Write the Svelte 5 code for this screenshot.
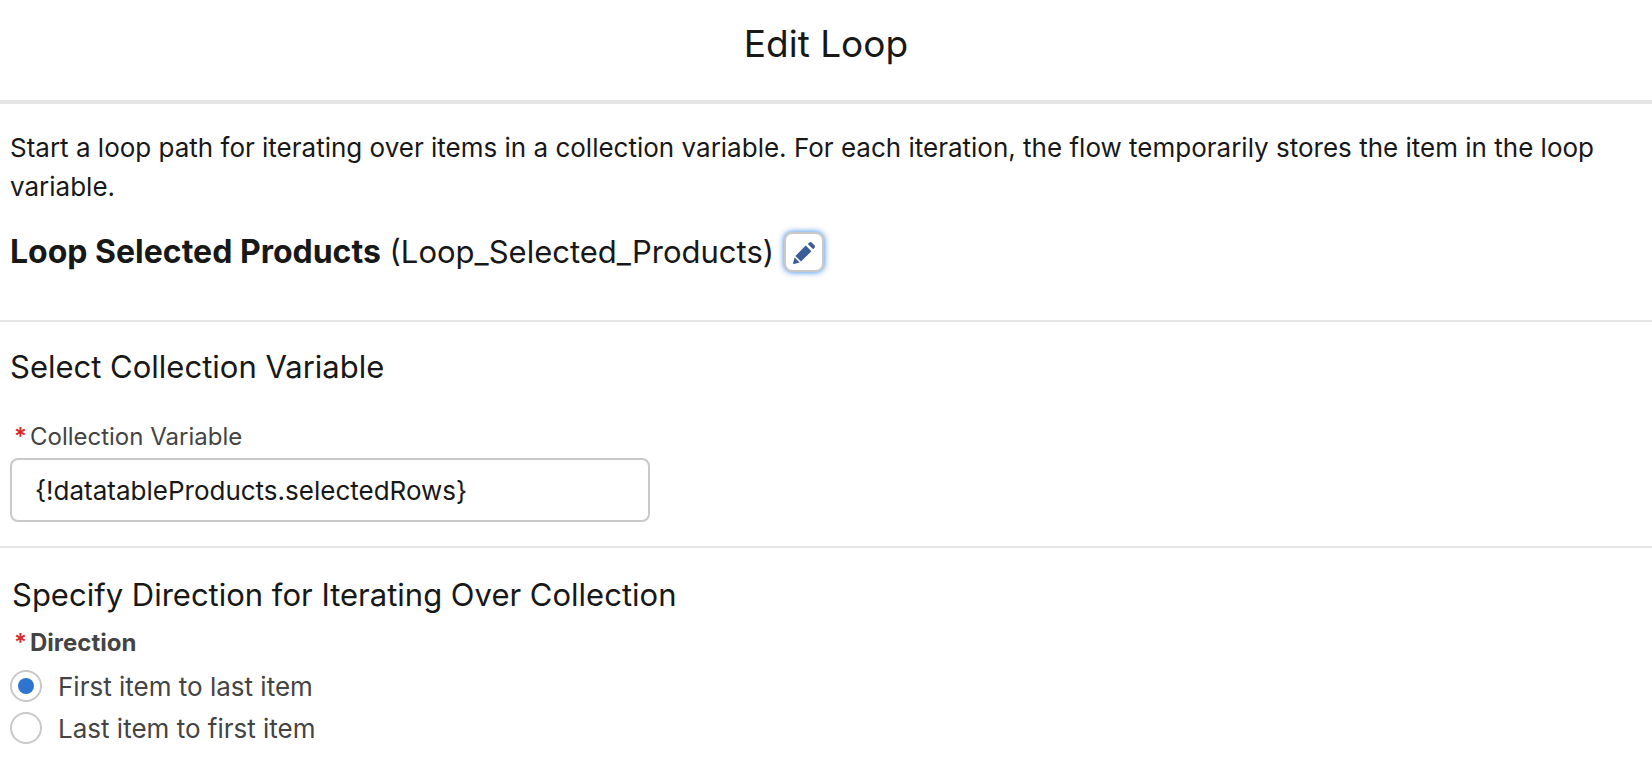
<script lang="ts">
    let collectionVariable = $state("{!datatableProducts.selectedRows}");
    let direction = $state("asc");

    const directions = [
        { value: "asc", label: "First item to last item" },
        { value: "desc", label: "Last item to first item" },
    ];
</script>

<header>
    <h1>Edit Loop</h1>
</header>

<main>
    <section class="intro">
        <p>
            Start a loop path for iterating over items in a collection variable. For each iteration, the flow
            temporarily stores the item in the loop variable.
        </p>
        <div class="name">
            <h2><strong>Loop Selected Products</strong> (Loop_Selected_Products)</h2>
            <button type="button" aria-label="Edit label and API name">
                <svg viewBox="0 0 24 24" aria-hidden="true">
                    <path d="M13.800 4.600 19.400 10.200 9 20.600 3.400 15z" />
                    <path d="M2.600 16.600 7.600 21.600 2 23q-1.100.2-.9-.9z" />
                    <path d="m15.800 2.900 1.300-1.200q1.400-1.200 2.800 0l2.500 2.500q1.200 1.400 0 2.800l-1.200 1.300z" />
                </svg>
            </button>
        </div>
    </section>

    <section class="collection">
        <h2>Select Collection Variable</h2>
        <label class="field-label" for="collection"><span class="required">*</span>Collection Variable</label>
        <input id="collection" type="text" required bind:value={collectionVariable} />
    </section>

    <section class="direction">
        <h2>Specify Direction for Iterating Over Collection</h2>
        <fieldset>
            <legend class="field-label"><span class="required">*</span>Direction</legend>
            {#each directions as item}
                <label class="option">
                    <input type="radio" name="direction" value={item.value} bind:group={direction} />
                    {item.label}
                </label>
            {/each}
        </fieldset>
    </section>
</main>

<style>
    :global(body) {
        margin: 0;
        background: #fff;
        color: #181818;
        font-family: Inter, "Liberation Sans", sans-serif;
        font-size: 26px;
        line-height: 39px;
    }

    header {
        padding: 19px 10px 31px;
        border-bottom: 4px solid #e5e5e5;
        text-align: center;
    }

    h1,
    h2,
    p {
        margin: 0;
        font-weight: 400;
    }

    h1 {
        font-size: 37px;
        line-height: 50px;
    }

    h2 {
        font-size: 31px;
        line-height: 40px;
    }

    strong {
        font-size: 32px;
    }

    section {
        padding: 0 10px;
    }

    section + section {
        border-top: 2px solid #e5e5e5;
    }

    .intro {
        padding-top: 24px;
        padding-bottom: 48px;
    }

    .name {
        display: flex;
        align-items: center;
        gap: 10px;
        margin-top: 26px;
    }

    button {
        display: flex;
        flex-shrink: 0;
        align-items: center;
        justify-content: center;
        width: 40px;
        height: 40px;
        padding: 2px 0 0;
        border: 2px solid #c9c9c9;
        border-radius: 8px;
        background: #fff;
        box-shadow: 0 0 6px #2f7fe8;
        cursor: pointer;
    }

    svg {
        width: 24px;
        height: 24px;
        fill: #3a5c98;
    }

    .collection {
        padding-top: 25px;
        padding-bottom: 24px;
    }

    .field-label {
        display: flex;
        gap: 3px;
        padding: 0 4px;
        color: #444;
        font-size: 24px;
        line-height: 30px;
    }

    .required {
        color: #d62b2b;
        font-weight: 600;
    }

    .collection .field-label {
        margin: 35px 0 6px;
    }

    input[type="text"] {
        display: block;
        box-sizing: border-box;
        width: 100%;
        max-width: 640px;
        height: 64px;
        padding: 0 23px;
        border: 2px solid #c9c9c9;
        border-radius: 8px;
        background: #fff;
        color: inherit;
        font: inherit;
    }

    .direction {
        padding-top: 27px;
    }

    .direction h2 {
        margin-bottom: 13px;
        padding-left: 2px;
    }

    fieldset {
        margin: 0;
        padding: 0;
        border: 0;
    }

    legend {
        margin-bottom: 7px;
        font-weight: 700;
    }

    .option {
        display: flex;
        align-items: center;
        gap: 16px;
        height: 42px;
        color: #444;
    }

    input[type="radio"] {
        display: grid;
        place-items: center;
        box-sizing: border-box;
        width: 32px;
        height: 32px;
        margin: 0;
        border: 2px solid #c9c9c9;
        border-radius: 50%;
        background: #fff;
        appearance: none;
    }

    input[type="radio"]:checked::before {
        content: "";
        width: 16px;
        height: 16px;
        border-radius: 50%;
        background: #2e75d0;
    }
</style>
